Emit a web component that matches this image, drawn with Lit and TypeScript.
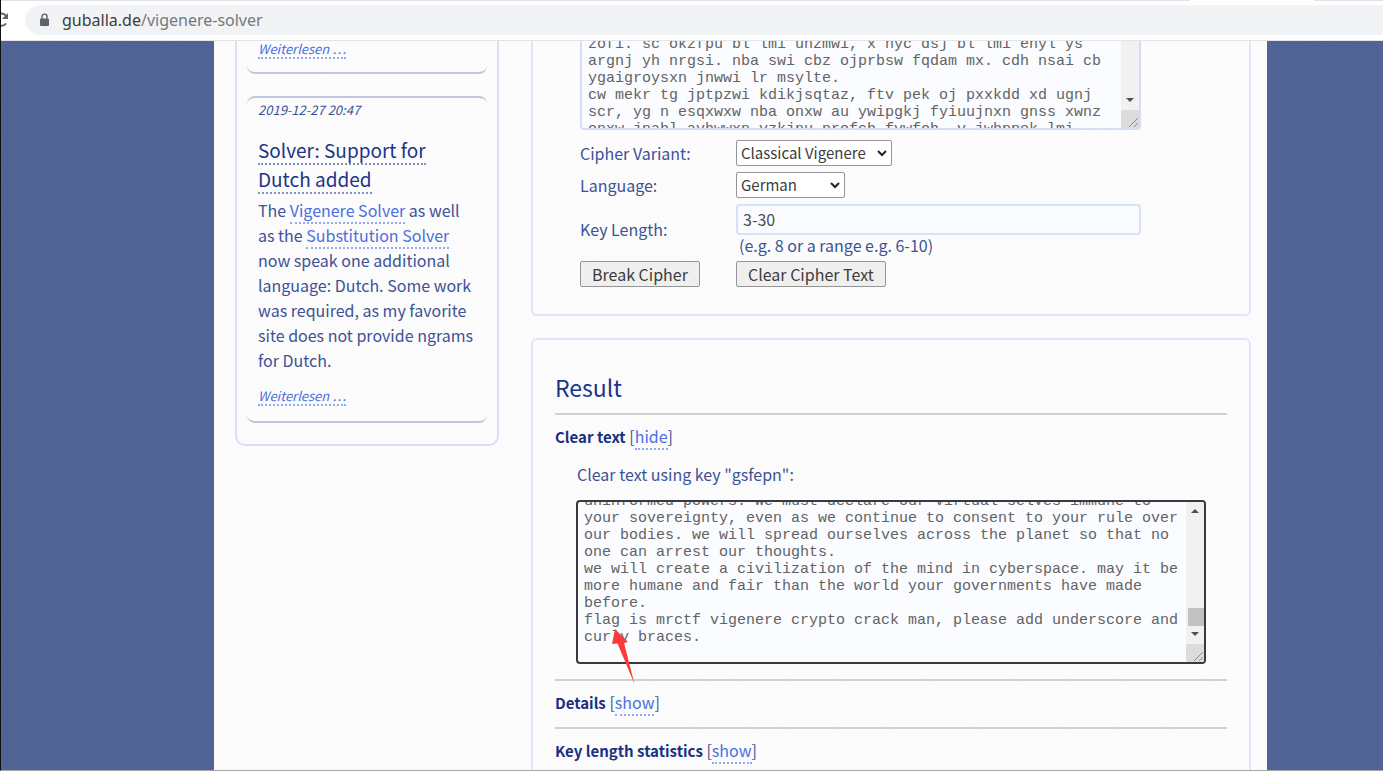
import { LitElement, html, css } from "lit";
import { customElement, property, query } from "lit/decorators.js";

const CIPHER_TEXT = `zofi. sc okzfpu bl lmi unzmwi, x nyc dsj bl lmi enyl ys
argnj yh nrgsi. nba swi cbz ojprbsw fqdam mx. cdh nsai cb
ygaigroysxn jnwwi lr msylte.
cw mekr tg jptpzwi kdikjsqtaz, ftv pek oj pxxkdd xd ugnj
scr, yg n esqxwxw nba onxw au ywipgkj fyiuujnxn gnss xwnz
onxw jnahl avhwwxn vzkjpu nrofch fvwfoh. v jwhppek lmi
`;

const CLEAR_TEXT = `uninformed powers. we must declare our virtual selves immune to
your sovereignty, even as we continue to consent to your rule over
our bodies. we will spread ourselves across the planet so that no
one can arrest our thoughts.
we will create a civilization of the mind in cyberspace. may it be
more humane and fair than the world your governments have made
before.
flag is mrctf vigenere crypto crack man, please add underscore and
curly braces.

`;

@customElement("scroll-text")
export class ScrollText extends LitElement {
  @property() label = "";
  @property() text = "";
  @property({ type: Number }) offset = 0;
  @property({ type: Boolean }) full = false;
  @query("textarea") area!: HTMLTextAreaElement;

  static styles = css`
    :host {
      display: flex;
      box-sizing: border-box;
      overflow: hidden;
      border: 2px solid #d3dcf8;
      border-radius: 4px;
      background: #fafcff;
    }
    textarea {
      flex: 1;
      min-width: 0;
      height: 100%;
      box-sizing: border-box;
      margin: 0;
      padding: 0 6px 32px;
      border: 0;
      outline: 0;
      resize: none;
      overflow: hidden;
      white-space: pre;
      background: transparent;
      color: #636363;
      font: 15px/17px "Liberation Mono", monospace;
    }
    .bar {
      flex: 0 0 18px;
      display: flex;
      flex-direction: column;
      align-items: center;
      background: #f1f1f1;
    }
    .track {
      flex: 1;
      align-self: stretch;
      display: flex;
      flex-direction: column;
      justify-content: flex-end;
    }
    .thumb {
      height: 18px;
      margin-left: 2px;
      background: #c1c1c1;
    }
    svg {
      display: block;
      flex: none;
    }
    .grip {
      background: #dcdcdc;
    }
  `;

  firstUpdated() {
    this.area.scrollTop = this.offset;
  }

  render() {
    return html`
      <textarea aria-label=${this.label} spellcheck="false" .value=${this.text}></textarea>
      <div class="bar">
        ${this.full
          ? html`<svg width="18" height="18"><path d="M5 11 L9 7 L13 11Z" fill="#505050" /></svg>`
          : ""}
        <div class="track">${this.full ? html`<div class="thumb"></div>` : ""}</div>
        <svg width="18" height="18"><path d="M5 6 L9 10 L13 6Z" fill="#505050" /></svg>
        <svg class="grip" width="18" height="18">
          <path d="M8 17 L17 8 M13 17 L17 13" stroke="#8c8c8c" fill="none" />
        </svg>
      </div>
    `;
  }
}

@customElement("app-root")
export class AppRoot extends LitElement {
  static styles = css`
    :host {
      display: flex;
      flex-direction: column;
      box-sizing: border-box;
      height: 100vh;
      overflow: hidden;
      border-left: 1px solid #111;
      border-bottom: 1px solid #a5a5a8;
      color: #3d5296;
      font: 16px/25px "Noto Sans CJK SC", sans-serif;
    }
    * {
      box-sizing: border-box;
    }
    .toolbar {
      flex: 0 0 41px;
      display: flex;
      flex-direction: column;
      background: #fff;
      border-bottom: 1px solid #e3e4e6;
    }
    .tabs {
      display: flex;
      justify-content: space-between;
      height: 1px;
      margin-bottom: 4px;
    }
    .tab-left {
      width: 86%;
      background: #dee1e6;
    }
    .tab-right {
      width: 5%;
      background: #dee1e6;
    }
    .nav {
      display: flex;
      height: 30px;
    }
    .reload {
      width: 24px;
      padding: 0;
      border: 0;
      background: none;
    }
    .omnibox {
      flex: 1;
      display: flex;
      align-items: center;
      gap: 12px;
      padding-left: 14px;
      border-radius: 15px 0 0 15px;
      background: #f1f3f4;
      color: #76797d;
      font: 16px/30px "Noto Sans", sans-serif;
    }
    .omnibox b {
      color: #3a3c40;
      font-weight: 400;
    }
    .page {
      flex: 1;
      min-height: 0;
      display: grid;
      grid-template-columns: 213fr 1053fr 116fr;
      background: repeating-linear-gradient(52deg, #506295 0 2px, #536597 2px 4px);
    }
    .sheet {
      grid-column: 2;
      display: flex;
      align-items: flex-start;
      gap: 32px;
      min-height: 0;
      padding: 0 16px 0 21px;
      background: repeating-linear-gradient(45deg, #fbfbfb 0 3px, #fcfcfc 3px 6px);
    }
    a {
      color: #4a6fe0;
      text-decoration: none;
      border-bottom: 2px dotted #8eacf0;
    }
    aside {
      flex: 0 0 264px;
      display: flex;
      flex-direction: column;
      gap: 22px;
      padding: 0 10px 21px;
      border: 2px solid #d9e0f5;
      border-top: 0;
      border-radius: 0 0 10px 10px;
    }
    article {
      padding: 0 11px;
      border: 0 solid #c0c6e0;
      border-width: 2px 0;
      border-radius: 8px;
    }
    .older {
      height: 33px;
      border-top: 0;
      border-radius: 0 0 8px 8px;
    }
    .date,
    .more {
      margin: 0;
      font-size: 13px;
      font-style: italic;
      line-height: 16px;
    }
    .date {
      padding-top: 4px;
    }
    .more a {
      display: inline-block;
    }
    .newer .more {
      margin: 15px 0 15px;
    }
    h3 {
      margin: 17px 0 5px;
      font-size: 19px;
      font-weight: 400;
      line-height: 29px;
    }
    h3 a {
      color: #1c3488;
      border-color: #8390c4;
    }
    .body {
      margin: 0;
    }
    main {
      flex: 1;
      min-width: 0;
      display: flex;
      flex-direction: column;
      gap: 22px;
    }
    section {
      border: 2px solid #dfe6fa;
      border-radius: 6px;
    }
    .form {
      display: grid;
      grid-template-columns: 156px 1fr;
      align-items: center;
      row-gap: 6px;
      padding: 0 108px 27px 47px;
      border-top: 0;
      border-radius: 0 0 6px 6px;
    }
    .cipher {
      grid-column: 1 / 3;
      height: 89px;
      margin-bottom: 4px;
      border-top: 0;
      border-radius: 0 0 4px 4px;
    }
    .form > * {
      justify-self: start;
    }
    .form > .cipher,
    .form > .key {
      justify-self: stretch;
    }
    select,
    button.action {
      height: 26px;
      border: 1px solid #959595;
      border-radius: 2px;
      color: #3c3c3c;
      font: 16px/20px "Noto Sans CJK SC", sans-serif;
    }
    select {
      appearance: none;
      padding: 0 16px 0 4px;
      font-size: 15px;
      line-height: 24px;
      background: #fff
        url("data:image/svg+xml,%3Csvg xmlns='http://www.w3.org/2000/svg' width='10' height='7'%3E%3Cpath d='M1 1 L5 5 L9 1' fill='none' stroke='%23222' stroke-width='2'/%3E%3C/svg%3E")
        no-repeat right 4px center;
    }
    .variant {
      width: 156px;
    }
    .language {
      width: 109px;
    }
    button.action {
      padding: 0 11px;
      background: #efefef;
    }
    .key input {
      display: block;
      width: 100%;
      height: 31px;
      padding: 0 5px 2px;
      border: 2px solid #d8e1fa;
      border-radius: 4px;
      background: #fafcff;
      color: #4c4c4c;
      font: 16px/25px "Noto Sans CJK SC", sans-serif;
    }
    .hint {
      display: block;
      padding-left: 3px;
      line-height: 20px;
    }
    .result {
      padding: 29px 22px 32px;
    }
    h2 {
      margin: 0 0 8px;
      color: #1c3488;
      font-size: 23px;
      font-weight: 400;
      line-height: 36px;
    }
    hr {
      height: 2px;
      margin: 0;
      border: 0;
      background: #d0d0d0;
    }
    .row {
      margin: 0;
      padding-bottom: 3px;
      line-height: 42px;
    }
    .row strong {
      color: #1a317f;
      font-size: 15px;
    }
    .caption {
      margin: 0 22px;
      padding: 1px 0 13px;
    }
    .clear {
      height: 164px;
      margin: 0 21px 15px;
      border-color: #3a3a3c;
    }
    .clear-wrap {
      position: relative;
    }
    .arrow {
      position: absolute;
      left: 57px;
      top: 129px;
    }
  `;

  render() {
    return html`
      <header class="toolbar">
        <div class="tabs"><div class="tab-left"></div><div class="tab-right"></div></div>
        <div class="nav">
          <button class="reload" aria-label="Reload">
            <svg width="24" height="30" fill="none" stroke="#5f6368" stroke-width="2">
              <path d="M5 18.5 A5.5 5.5 0 0 1 -4 18.500 M-4 10.500 A5.500 5.500 0 0 1 5 11" />
              <path d="M7 8 V14 H1Z" fill="#5f6368" stroke="none" />
            </svg>
          </button>
          <div class="omnibox">
            <svg width="11" height="14" viewBox="0 0 11 14">
              <path d="M3 6 V3.6 a2.5 2.5 0 0 1 5 0 V6" fill="none" stroke="#5f6368" stroke-width="1.4" />
              <rect x="1" y="5.5" width="9" height="7.5" rx="1" fill="#5f6368" />
            </svg>
            <span><b>guballa.de</b>/vigenere-solver</span>
          </div>
        </div>
      </header>
      <div class="page">
        <div class="sheet">
          <aside>
            <article class="older">
              <p class="more"><a href="#older">Weiterlesen …</a></p>
            </article>
            <article class="newer">
              <p class="date">2019-12-27 20:47</p>
              <h3><a href="#dutch">Solver: Support for Dutch added</a></h3>
              <p class="body">
                The <a href="#vigenere">Vigenere Solver</a> as well as the
                <a href="#substitution">Substitution Solver</a> now speak one additional
                language: Dutch. Some work was required, as my favorite site does not provide
                ngrams for Dutch.
              </p>
              <p class="more"><a href="#dutch">Weiterlesen …</a></p>
            </article>
          </aside>
          <main>
            <section class="form">
              <scroll-text class="cipher" label="Cipher text" .text=${CIPHER_TEXT} .offset=${5}></scroll-text>
              <label for="variant">Cipher Variant:</label>
              <select id="variant" class="variant"><option>Classical Vigenere</option></select>
              <label for="language">Language:</label>
              <select id="language" class="language"><option>German</option></select>
              <label for="key">Key Length:</label>
              <div class="key">
                <input id="key" type="text" value="3-30" />
                <span class="hint">(e.g. 8 or a range e.g. 6-10)</span>
              </div>
              <button class="action">Break Cipher</button>
              <button class="action">Clear Cipher Text</button>
            </section>
            <section class="result">
              <h2>Result</h2>
              <hr />
              <p class="row"><strong>Clear text</strong> [<a href="#hide">hide</a>]</p>
              <p class="caption">Clear text using key "gsfepn":</p>
              <div class="clear-wrap">
                <scroll-text class="clear" label="Clear text" full .text=${CLEAR_TEXT} .offset=${9}></scroll-text>
                <svg class="arrow" width="24" height="56" viewBox="0 0 24 56">
                  <path d="M3 0 L16 13 L12 14 L22.500 55 L5.500 14.500 L0 15Z" fill="#fb3b3b" />
                </svg>
              </div>
              <hr />
              <p class="row"><strong>Details</strong> [<a href="#details">show</a>]</p>
              <hr />
              <p class="row"><strong>Key length statistics</strong> [<a href="#statistics">show</a>]</p>
            </section>
          </main>
        </div>
      </div>
    `;
  }
}
